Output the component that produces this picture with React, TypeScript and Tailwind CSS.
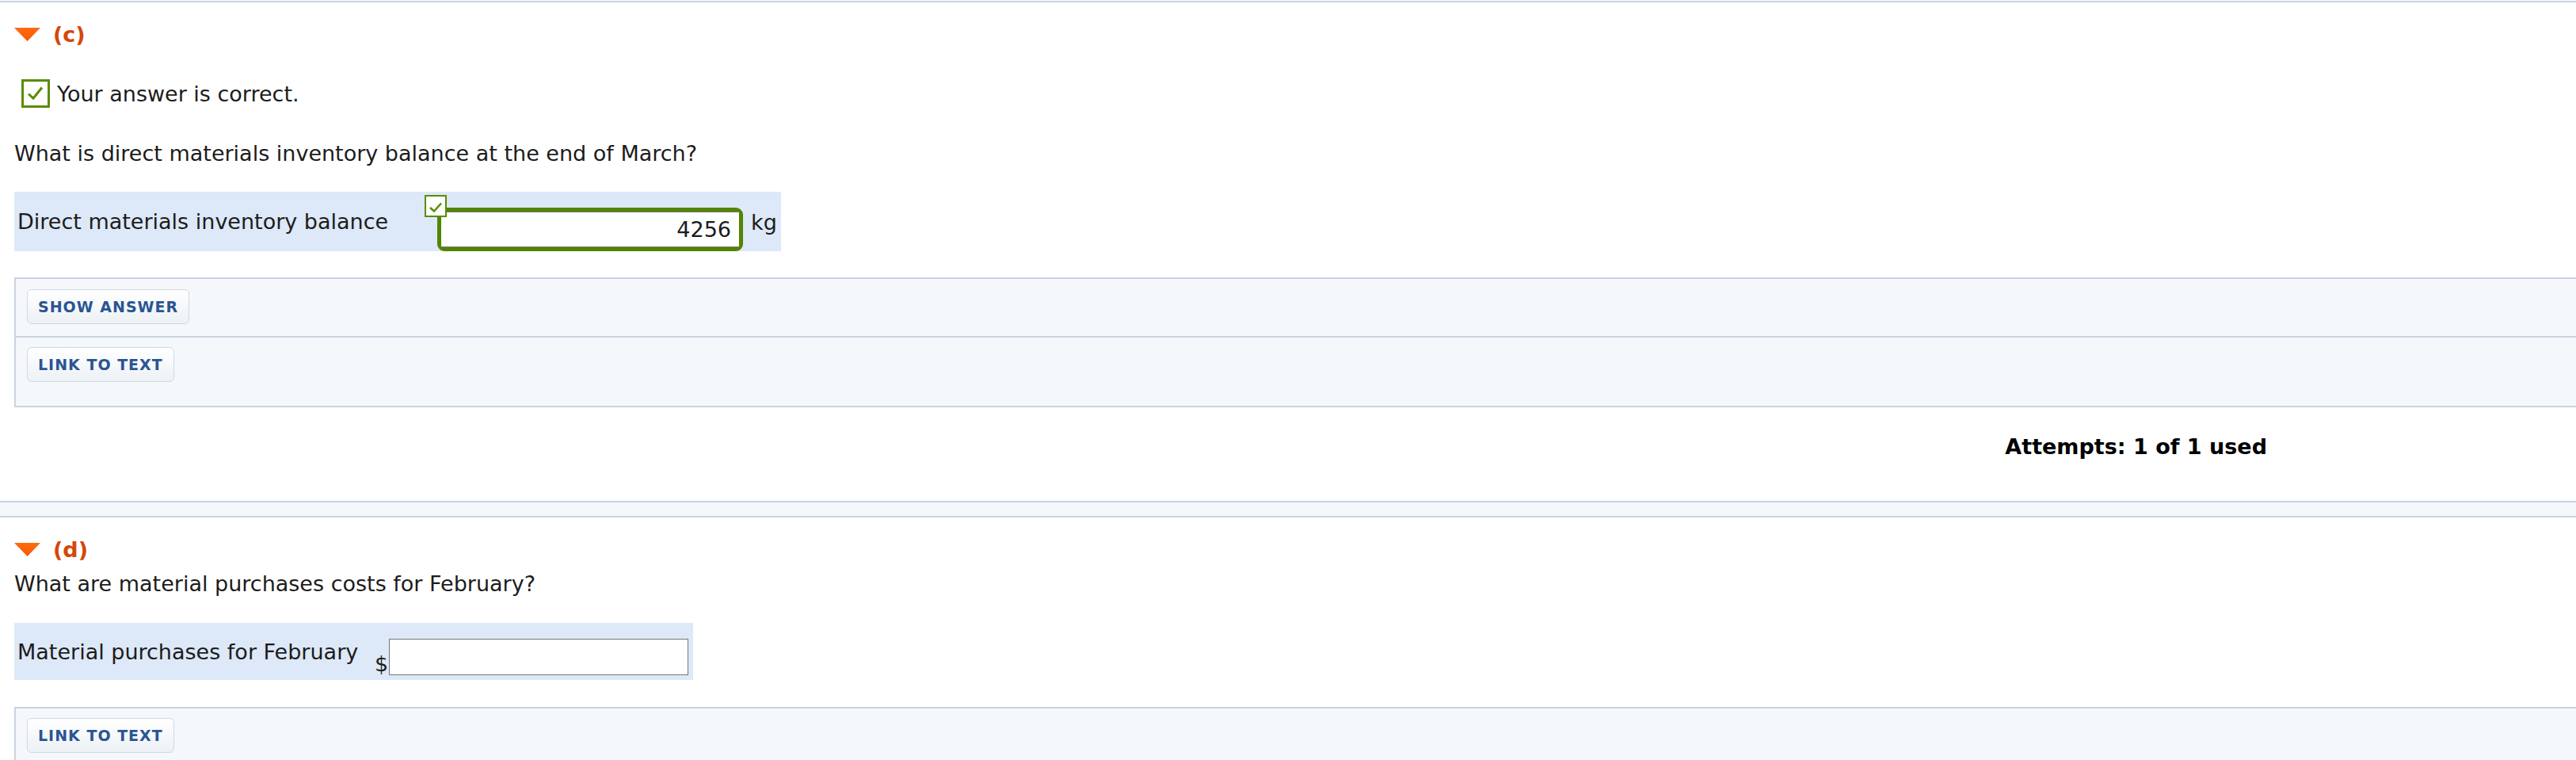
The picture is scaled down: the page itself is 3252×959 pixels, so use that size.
import type { ReactNode } from "react";

function Triangle() {
  return (
    <svg aria-hidden="true" className="h-[18px] w-[33px]" viewBox="0 0 33 18">
      <defs>
        <linearGradient id="tri" x1="0" x2="0" y1="0" y2="1">
          <stop offset="0" stopColor="#ff6a10" />
          <stop offset="1" stopColor="#f55a08" />
        </linearGradient>
      </defs>
      <polygon fill="url(#tri)" points="0,0 33,0 16.5,17" />
    </svg>
  );
}

function CheckBox({ small = false }: { small?: boolean }) {
  if (small) {
    return (
      <span className="flex h-[28px] w-[28px] items-center justify-center border-2 border-[#5a8c00] bg-white">
        <svg aria-hidden="true" className="h-[24px] w-[24px]" viewBox="0 0 24 24">
          <path d="M5 14 L10 18.5 L19 8.5" fill="none" stroke="#5a8c00" strokeWidth="2.6" />
        </svg>
      </span>
    );
  }

  return (
    <span className="flex h-[36px] w-[36px] items-center justify-center border-[3px] border-[#5a8c00] bg-white">
      <svg aria-hidden="true" className="h-[30px] w-[30px]" viewBox="0 0 30 30">
        <path d="M6 15.5 L12 21 L23 7.5" fill="none" stroke="#5a8c00" strokeWidth="3" />
      </svg>
    </span>
  );
}

function PanelButton({ children }: { children: ReactNode }) {
  return (
    <button
      className="flex h-[44px] items-center rounded-[6px] border border-[#cfd8e3] bg-gradient-to-b from-white to-[#edf1f5] px-[13px] text-[19px] font-bold tracking-[1px] text-[#2a5592]"
      type="button"
    >
      {children}
    </button>
  );
}

function PartHeader({ label }: { label: string }) {
  return (
    <div className="flex items-center leading-[33px]">
      <Triangle />
      <span className="ml-[16px] font-bold text-[#d4470a]">{label}</span>
    </div>
  );
}

export default function App() {
  return (
    <div className="min-h-screen overflow-hidden bg-white pt-[1px] font-['DejaVu_Sans',Verdana,sans-serif] text-[27px] leading-[33px] text-[#1c1c1c]">
      <section className="border-t-2 border-[#c9d3df]">
        <div className="pl-[18px]">
          <div className="mt-[24px]">
            <PartHeader label="(c)" />
          </div>

          <div className="mt-[40px] flex h-[36px] items-center pl-[9px]">
            <CheckBox />
            <span className="ml-[9px]">Your answer is correct.</span>
          </div>

          <p className="mt-[41px]">What is direct materials inventory balance at the end of March?</p>

          <div className="mt-[32px] flex h-[75px] w-fit bg-[#dde8f8] pr-[5px]">
            <div className="flex w-[518px] items-center pl-1">Direct materials inventory balance</div>
            <div className="relative flex items-start pl-[16px] pt-[20px]">
              <span className="absolute left-0 top-[4px] z-10">
                <CheckBox small />
              </span>
              <div className="h-[55px] w-[386px] rounded-[9px] border-[5px] border-[#528400] bg-white">
                <input
                  className="h-full w-full border-y border-[#7a7a7a] bg-white pr-[10px] text-right text-[27px] outline-none"
                  defaultValue="4256"
                  readOnly
                />
              </div>
              <span className="ml-[10px] mt-[2px]">kg</span>
            </div>
          </div>

          <div className="mt-[33px] border-y-2 border-l-2 border-[#c9d3df] bg-[#f5f8fb]">
            <div className="pb-[15px] pl-[14px] pt-[13px]">
              <PanelButton>SHOW ANSWER</PanelButton>
            </div>
            <div className="border-t-2 border-[#c9d3df] pb-[30px] pl-[14px] pt-[12px]">
              <PanelButton>LINK TO TEXT</PanelButton>
            </div>
          </div>

          <div className="mt-[33px] flex justify-end pr-[390px] font-bold text-black">Attempts: 1 of 1 used</div>
        </div>

        <div className="mt-[52px] h-[21px] border-y-2 border-[#c9d3df] bg-[#f5f8fb]" />
      </section>

      <section className="pl-[18px]">
        <div className="mt-[24px]">
          <PartHeader label="(d)" />
        </div>

        <p className="mt-[10px]">What are material purchases costs for February?</p>

        <div className="mt-[33px] flex h-[72px] w-fit bg-[#dde8f8] pr-[6px]">
          <div className="flex w-[455px] items-center pl-1">Material purchases for February</div>
          <div className="flex items-end pb-[6px]">
            <span className="mb-[-2px]">$</span>
            <input
              aria-label="Material purchases for February"
              className="ml-[1px] h-[46px] w-[378px] border border-[#767676] bg-white px-2 text-[27px] outline-none"
              type="text"
            />
          </div>
        </div>

        <div className="mt-[34px] min-h-[120px] border-l-2 border-t-2 border-[#c9d3df] bg-[#f5f8fb] pl-[14px] pt-[12px]">
          <PanelButton>LINK TO TEXT</PanelButton>
        </div>
      </section>
    </div>
  );
}
